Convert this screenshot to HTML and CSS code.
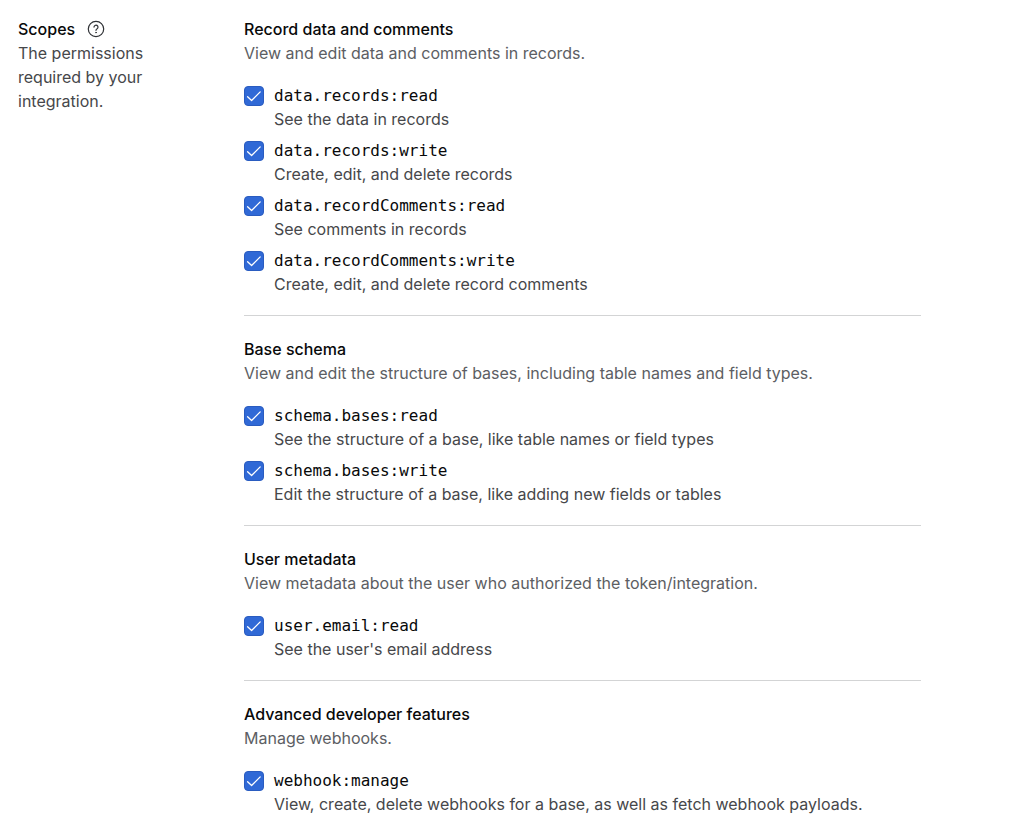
FILE: index.html
```html
<!DOCTYPE html>
<html lang="en">
<head>
  <meta charset="UTF-8" />
  <meta name="viewport" content="width=device-width, initial-scale=1.0"/>
  <title>Scopes</title>
  <link rel="stylesheet" href="styles.css">
</head>
<body>

  <main class="scopes">
    <aside class="intro">
      <div class="intro-title">
        <h2>Scopes</h2>
        <button type="button" class="help" aria-label="Help">
          <svg width="18" height="18" viewBox="0 0 18 18" fill="none" stroke="#303236" stroke-width="1.2" stroke-linecap="round" stroke-linejoin="round">
            <circle cx="9" cy="9" r="7.7"/>
            <path d="M7 7.1a2 2 0 1 1 3.1 1.7c-.8.5-1.1.8-1.1 1.5"/>
            <circle cx="9" cy="12.6" r=".5" fill="#303236" stroke-width=".6"/>
          </svg>
        </button>
      </div>
      <p>The permissions required by your integration.</p>
    </aside>

    <form class="groups">
      <section class="group">
        <h3>Record data and comments</h3>
        <p class="about">View and edit data and comments in records.</p>
        <div class="scope">
          <input type="checkbox" id="records-read" checked />
          <label for="records-read"><code>data.records:read</code><span>See the data in records</span></label>
        </div>
        <div class="scope">
          <input type="checkbox" id="records-write" checked />
          <label for="records-write"><code>data.records:write</code><span>Create, edit, and delete records</span></label>
        </div>
        <div class="scope">
          <input type="checkbox" id="comments-read" checked />
          <label for="comments-read"><code>data.recordComments:read</code><span>See comments in records</span></label>
        </div>
        <div class="scope">
          <input type="checkbox" id="comments-write" checked />
          <label for="comments-write"><code>data.recordComments:write</code><span>Create, edit, and delete record comments</span></label>
        </div>
      </section>

      <section class="group">
        <h3>Base schema</h3>
        <p class="about">View and edit the structure of bases, including table names and field types.</p>
        <div class="scope">
          <input type="checkbox" id="schema-read" checked />
          <label for="schema-read"><code>schema.bases:read</code><span>See the structure of a base, like table names or field types</span></label>
        </div>
        <div class="scope">
          <input type="checkbox" id="schema-write" checked />
          <label for="schema-write"><code>schema.bases:write</code><span>Edit the structure of a base, like adding new fields or tables</span></label>
        </div>
      </section>

      <section class="group">
        <h3>User metadata</h3>
        <p class="about">View metadata about the user who authorized the token/integration.</p>
        <div class="scope">
          <input type="checkbox" id="email-read" checked />
          <label for="email-read"><code>user.email:read</code><span>See the user's email address</span></label>
        </div>
      </section>

      <section class="group">
        <h3>Advanced developer features</h3>
        <p class="about">Manage webhooks.</p>
        <div class="scope">
          <input type="checkbox" id="webhook-manage" checked />
          <label for="webhook-manage"><code>webhook:manage</code><span>View, create, delete webhooks for a base, as well as fetch webhook payloads.</span></label>
        </div>
      </section>
    </form>
  </main>

</body>
</html>
```

FILE: styles.css
```css
* {
  box-sizing: border-box;
}

body {
  margin: 0;
  background-color: #fff;
  color: #46474a;
  font-family: Inter, "Liberation Sans", sans-serif;
  font-size: 16px;
  line-height: 24px;
}

h2, h3, p {
  margin: 0;
}

h2, h3 {
  color: #08090a;
  font-size: 16px;
  font-weight: 500;
}

.scopes {
  display: grid;
  grid-template-columns: 148px minmax(0, 1fr);
  column-gap: 78px;
  padding: 17px 103px 17px 18px;
}

.intro-title {
  display: flex;
  align-items: center;
  gap: 12px;
}

.help {
  display: flex;
  padding: 0;
  border: none;
  background: none;
  cursor: pointer;
}

.group {
  padding-bottom: 21px;
}

.group + .group {
  border-top: 1px solid #d3d4d5;
  padding-top: 21px;
}

.about {
  margin-bottom: 18px;
  color: #5c5e63;
}

.scope {
  display: flex;
  gap: 10px;
}

.scope + .scope {
  margin-top: 9px;
}

.scope input {
  appearance: none;
  flex: none;
  width: 20px;
  height: 20px;
  margin: 3px 0 0;
  border: 1px solid #2a5cc0;
  border-radius: 4px;
  background: #3069d6 url("data:image/svg+xml,%3Csvg xmlns='http://www.w3.org/2000/svg' viewBox='0 0 20 20' fill='none' stroke='white' stroke-width='1.3' stroke-linecap='round' stroke-linejoin='round'%3E%3Cpath d='M3.6 10.7 7.6 14.5 16.2 5.9'/%3E%3C/svg%3E") center / 20px 20px;
}

.scope input:not(:checked) {
  border-color: #8b8d92;
  background: #fff;
}

.scope code {
  display: block;
  color: #08090a;
  font-family: "DejaVu Sans Mono", monospace;
  font-size: 16px;
  line-height: 26px;
}

.scope span {
  display: block;
  line-height: 20px;
}
```
